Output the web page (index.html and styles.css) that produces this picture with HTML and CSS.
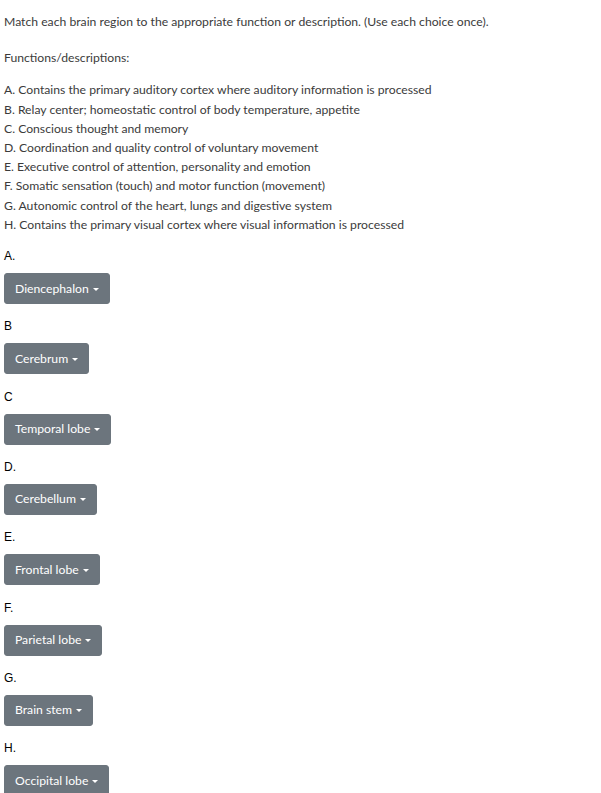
FILE: index.html
```html
<!DOCTYPE html>
<html lang="en">
<head>
  <meta charset="UTF-8">
  <title>Brain regions</title>
  <link rel="stylesheet" href="styles.css">
</head>
<body>
  <div class="question">
    <p class="prompt">Match each brain region to the appropriate function or description. (Use each choice once).</p>
    <p class="prompt">Functions/descriptions:</p>
    <ul class="choices">
      <li>A. Contains the primary auditory cortex where auditory information is processed</li>
      <li>B. Relay center; homeostatic control of body temperature, appetite</li>
      <li>C. Conscious thought and memory</li>
      <li>D. Coordination and quality control of voluntary movement</li>
      <li>E. Executive control of attention, personality and emotion</li>
      <li>F. Somatic sensation (touch) and motor function (movement)</li>
      <li>G. Autonomic control of the heart, lungs and digestive system</li>
      <li>H. Contains the primary visual cortex where visual information is processed</li>
    </ul>

    <div class="answers">
      <div class="answer">
        <span class="label">A.</span>
        <button class="btn-select">Diencephalon</button>
      </div>
      <div class="answer">
        <span class="label">B</span>
        <button class="btn-select">Cerebrum</button>
      </div>
      <div class="answer">
        <span class="label">C</span>
        <button class="btn-select">Temporal lobe</button>
      </div>
      <div class="answer">
        <span class="label">D.</span>
        <button class="btn-select">Cerebellum</button>
      </div>
      <div class="answer">
        <span class="label">E.</span>
        <button class="btn-select">Frontal lobe</button>
      </div>
      <div class="answer">
        <span class="label">F.</span>
        <button class="btn-select">Parietal lobe</button>
      </div>
      <div class="answer">
        <span class="label">G.</span>
        <button class="btn-select">Brain stem</button>
      </div>
      <div class="answer">
        <span class="label">H.</span>
        <button class="btn-select">Occipital lobe</button>
      </div>
    </div>
  </div>
</body>
</html>
```

FILE: styles.css
```css
* {
  box-sizing: border-box;
  margin: 0;
  padding: 0;
}
body {
  background: #ffffff;
  color: #3b3b3b;
  font-family: 'Lato', 'Open Sans', sans-serif;
  font-size: 12.2px;
  line-height: 19.2px;
}
.question {
  padding: 12px 4px 0 4px;
}
.prompt {
  margin-bottom: 17px;
}
.choices {
  list-style: none;
  margin-top: -4px;
  margin-bottom: 15px;
}
.answers {
  display: flex;
  flex-direction: column;
  gap: 15.3px;
}
.answer {
  display: flex;
  flex-direction: column;
  align-items: flex-start;
  gap: 9px;
}
.label {
  font-family: 'Liberation Sans', Arial, sans-serif;
  font-size: 12px;
  line-height: 15px;
  color: #000;
}
.btn-select {
  font-family: inherit;
  font-size: 12.2px;
  line-height: 18px;
  color: #ffffff;
  background: #6c757d;
  border: 1px solid #6c757d;
  border-radius: 3px;
  padding: 5.5px 10px;
  cursor: pointer;
}
.btn-select::after {
  content: "";
  display: inline-block;
  margin-left: 4px;
  vertical-align: 2px;
  border-top: 3.5px solid #ffffff;
  border-left: 3px solid transparent;
  border-right: 3px solid transparent;
}
```
